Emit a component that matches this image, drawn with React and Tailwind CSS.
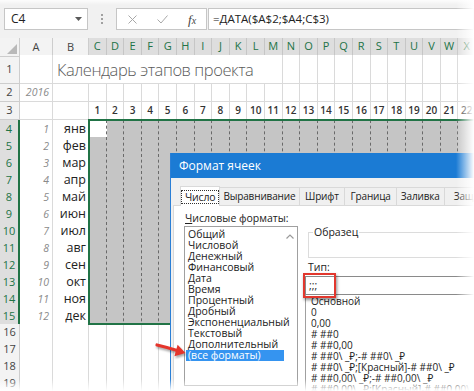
import React from "react";

const letters = "CDEFGHIJKLMNOPQRSTUVWX".split("");
const months = ["янв", "фев", "мар", "апр", "май", "июн", "июл", "авг", "сен", "окт", "ноя", "дек"];
const grid = "grid grid-cols-[20px_33px_36px_repeat(22,17.6px)]";

const leftFormats = [
  "Общий",
  "Числовой",
  "Денежный",
  "Финансовый",
  "Дата",
  "Время",
  "Процентный",
  "Дробный",
  "Экспоненциальный",
  "Текстовый",
  "Дополнительный",
  "(все форматы)",
];

const codes = [
  "Основной",
  "0",
  "0,00",
  "# ##0",
  "# ##0,00",
  "# ##0\\ _₽;-# ##0\\ _₽",
  "# ##0\\ _₽;[Красный]-# ##0\\ _₽",
  "# ##0,00\\ _₽;-# ##0,00\\ _₽",
  "# ##0,00\\ _₽;[Красный]-# ##0,00\\ _₽",
];

const tabs = [
  ["Выравнивание", "w-[83px]"],
  ["Шрифт", "w-[48px]"],
  ["Граница", "w-[54px]"],
  ["Заливка", "w-[50px]"],
  ["Защита", "w-[58px]"],
];

function RowHead({ num, active }) {
  return (
    <div
      className={
        active
          ? "flex items-center justify-center border-b border-r-2 border-b-[#c6c6c6] border-r-[#217346] bg-[#dedede] text-[11px] text-[#217346]"
          : "flex items-center justify-center border-b border-r border-[#cdcdcd] bg-[#f3f3f3] text-[11px] text-[#444]"
      }
    >
      {num}
    </div>
  );
}

function Cell({ children, className = "" }) {
  return <div className={`border-b border-r border-[#dadada] bg-white ${className}`}>{children}</div>;
}

function Sheet() {
  return (
    <div className="relative">
      {/* column headers */}
      <div className={`${grid} h-[17px]`}>
        <div className="relative border-b border-r border-[#cdcdcd] bg-[#f3f3f3]">
          <svg className="absolute left-[7px] top-[6px]" width="10" height="10" viewBox="0 0 10 10">
            <path d="M10 0 L10 10 L0 10 Z" fill="#b9b9b9" />
          </svg>
        </div>
        {["A", "B"].map((l) => (
          <div key={l} className="flex items-center justify-center border-b border-r border-[#cdcdcd] bg-[#f3f3f3] text-[11px] text-[#444]">
            {l}
          </div>
        ))}
        {letters.map((l) => (
          <div key={l} className="flex items-center justify-center border-b-2 border-r border-b-[#217346] border-r-[#c6c6c6] bg-[#dedede] text-[11px] text-[#217346]">
            {l}
          </div>
        ))}
      </div>

      {/* row 1 */}
      <div className={`${grid} h-[29px]`}>
        <RowHead num="1" />
        <Cell />
        <div className="col-span-12 flex items-end border-b border-r border-[#dadada] bg-white pb-[2px] pl-[4px]">
          <span className="whitespace-nowrap text-[16.5px] font-light leading-[22px] tracking-[-0.45px] text-[#5b5b5b]">
            Календарь этапов проекта
          </span>
        </div>
        {letters.slice(11).map((l) => (
          <Cell key={l} />
        ))}
      </div>

      {/* row 2 */}
      <div className={`${grid} h-[18px]`}>
        <RowHead num="2" />
        <Cell className="flex items-center justify-end pr-[3px] text-[10.5px] italic text-[#8a8a8a]">2016</Cell>
        <Cell />
        {letters.map((l) => (
          <Cell key={l} />
        ))}
      </div>

      {/* row 3 */}
      <div className={`${grid} h-[18px]`}>
        <RowHead num="3" />
        <Cell />
        <Cell />
        {letters.map((l, i) => (
          <Cell key={l} className="flex items-center justify-center text-[10px] font-semibold text-[#333]">
            {i + 1}
          </Cell>
        ))}
      </div>

      {/* rows 4-15 */}
      {months.map((m, r) => (
        <div key={m} className={`${grid} h-[17px]`}>
          <RowHead num={r + 4} active />
          <Cell className="flex items-center justify-end pr-[3px] text-[10.5px] italic text-[#8a8a8a]">{r + 1}</Cell>
          <Cell className="flex items-center justify-end pr-[2px] text-[12.5px] text-[#222]">{m}</Cell>
          {letters.map((l, i) => (
            <div
              key={l}
              className={
                r === 0 && i === 0
                  ? "border-b border-r border-dashed border-[#6a6a6a] bg-white"
                  : "border-b border-r border-dashed border-[#6a6a6a] bg-[#c5c5c5]"
              }
            />
          ))}
        </div>
      ))}

      {/* rows 16-19 */}
      {[16, 17, 18, 19].map((n) => (
        <div key={n} className={`${grid} h-[17px]`}>
          <RowHead num={n} />
          <Cell />
          <Cell />
          {letters.map((l) => (
            <Cell key={l} />
          ))}
        </div>
      ))}

      {/* selection C4:W15 */}
      <div className="pointer-events-none absolute left-[88px] top-[81px] h-[206px] w-[420px] border-2 border-[#217346]" />
    </div>
  );
}

function FormulaBar() {
  return (
    <div className="flex h-[38px] items-start bg-[#f1f1f1] pt-[8px]">
      <div className="ml-[4px] flex h-[22px] w-[84px] items-center justify-between border border-[#c6c6c6] bg-white pl-[6px] pr-[5px]">
        <span className="text-[12px] text-[#222]">C4</span>
        <svg width="7" height="4" viewBox="0 0 7 4">
          <path d="M0 0 L7 0 L3.5 4 Z" fill="#5a5a5a" />
        </svg>
      </div>
      <div className="flex w-[28px] flex-col items-center justify-center gap-[2px] self-stretch pb-[8px]">
        <span className="h-[2px] w-[2px] bg-[#a0a0a0]" />
        <span className="h-[2px] w-[2px] bg-[#a0a0a0]" />
        <span className="h-[2px] w-[2px] bg-[#a0a0a0]" />
      </div>
      <div className="flex h-[22px] w-[91px] items-center border border-[#c6c6c6] bg-white">
        <svg className="ml-[11px]" width="9" height="9" viewBox="0 0 9 9">
          <path d="M0.5 0.5 L8.5 8.5 M8.5 0.5 L0.5 8.5" stroke="#a8a8a8" strokeWidth="1" />
        </svg>
        <svg className="ml-[20px]" width="11" height="9" viewBox="0 0 11 9">
          <path d="M0.5 4.5 L4 8 L10.5 0.5" stroke="#a8a8a8" strokeWidth="1" fill="none" />
        </svg>
        <span className="ml-[20px] font-['Liberation_Serif',serif] text-[13px] italic leading-none text-[#444]">
          f<span className="text-[10px]">x</span>
        </span>
      </div>
      <div className="ml-[1px] flex h-[22px] flex-1 items-center border border-[#c6c6c6] bg-white pl-[4px]">
        <span className="text-[11.5px] text-[#222]">=ДАТА($A$2;$A4;C$3)</span>
      </div>
    </div>
  );
}

function Dialog() {
  return (
    <div className="absolute left-[170px] top-[153px] h-[260px] w-[330px] border-l border-[#2a7fd6] bg-[#f0f0f0]">
      <div className="flex h-[25px] items-center bg-[#1b7bd4] pl-[8px] text-[12px] text-white">Формат ячеек</div>
      <div className="flex h-[27px] items-end pl-[9px]">
        <div className="relative z-10 -mb-px flex h-[20px] w-[42px] items-center justify-center border border-b-0 border-[#d9d9d9] bg-white">
          <span className="border border-dotted border-[#333] px-[3px] text-[10.5px] leading-[12px] tracking-[-0.2px] text-[#222]">Число</span>
        </div>
        {tabs.map(([t, w]) => (
          <div
            key={t}
            className={`flex h-[18px] ${w} items-center justify-center border-r border-t border-[#d9d9d9] bg-[#f0f0f0] text-[10px] tracking-[-0.15px] text-[#222]`}
          >
            {t}
          </div>
        ))}
      </div>
      <div className="ml-[2px] flex h-full gap-[7px] border-l border-t border-[#d9d9d9] bg-white pl-[10px] pt-[5px]">
        <div className="w-[114px] shrink-0">
          <div className="pl-[1px] text-[10.5px] leading-[14px] text-[#222]">
            <span className="underline">Ч</span>исловые форматы:
          </div>
          <div className="relative mt-[1px] h-[160px] border border-[#a0a0a0] bg-white pl-[3px] pr-[13px] pt-[2px]">
            {leftFormats.map((f, i) => (
              <div
                key={f}
                className={
                  i === leftFormats.length - 1
                    ? "-ml-[2px] h-[11px] bg-[#3594f0] pl-[2px] text-[10.5px] leading-[11px] text-white"
                    : "h-[11px] whitespace-nowrap text-[10.5px] leading-[11px] text-[#222]"
                }
              >
                {f}
              </div>
            ))}
            <svg className="absolute right-[3px] top-[7px]" width="8" height="5" viewBox="0 0 8 5">
              <path d="M0.5 4.5 L4 1 L7.5 4.5" stroke="#9a9a9a" strokeWidth="1.2" fill="none" />
            </svg>
          </div>
        </div>
        <div className="flex-1">
          <fieldset className="ml-[3px] mt-[14px] h-[33px] border border-[#dcdcdc]">
            <legend className="ml-[4px] px-[1px] text-[10.5px] leading-[14px] text-[#222]">Образец</legend>
          </fieldset>
          <div className="mt-[2px] pl-[3px] text-[10.5px] leading-[14px] text-[#222]">Тип:</div>
          <div className="mt-[2px] flex h-[19px] items-center border border-[#8a8a8a] bg-white pl-[3px] text-[10.5px] text-[#222]">;;;</div>
          <div className="h-[120px] border-x border-[#a0a0a0] bg-white pl-[5px] pt-[1px]">
            {codes.map((c) => (
              <div key={c} className="h-[11px] whitespace-nowrap text-[10px] leading-[11px] text-[#222]">
                {c}
              </div>
            ))}
          </div>
        </div>
      </div>
    </div>
  );
}

export default function App() {
  return (
    <div className="relative h-[391px] w-[474px] overflow-hidden bg-white font-['Open_Sans','Noto_Sans',sans-serif]">
      <FormulaBar />
      <Sheet />
      <Dialog />

      {/* highlight around type field */}
      <div className="absolute left-[303px] top-[273px] h-[25px] w-[33px] border-2 border-[#e2372d] shadow-[1px_2px_3px_rgba(0,0,0,0.45)]" />

      {/* red arrow */}
      <svg className="absolute left-[150px] top-[336px] drop-shadow-[1px_2px_1px_rgba(0,0,0,0.35)]" width="40" height="26" viewBox="0 0 40 26">
        <path d="M7 9 Q16 11 27 14.6" stroke="#e5352b" strokeWidth="3.2" fill="none" strokeLinecap="round" />
        <path d="M35.5 17 L24.4 20.2 L27.6 8.8 Z" fill="#e5352b" />
      </svg>

      {/* soft edge fades */}
      <div className="pointer-events-none absolute right-0 top-0 h-full w-[18px] bg-gradient-to-r from-white/0 to-white" />
      <div className="pointer-events-none absolute bottom-0 left-0 h-[12px] w-full bg-gradient-to-b from-white/0 to-white" />
      <div className="pointer-events-none absolute left-0 top-0 h-[5px] w-full bg-gradient-to-t from-white/0 to-white/80" />
    </div>
  );
}
